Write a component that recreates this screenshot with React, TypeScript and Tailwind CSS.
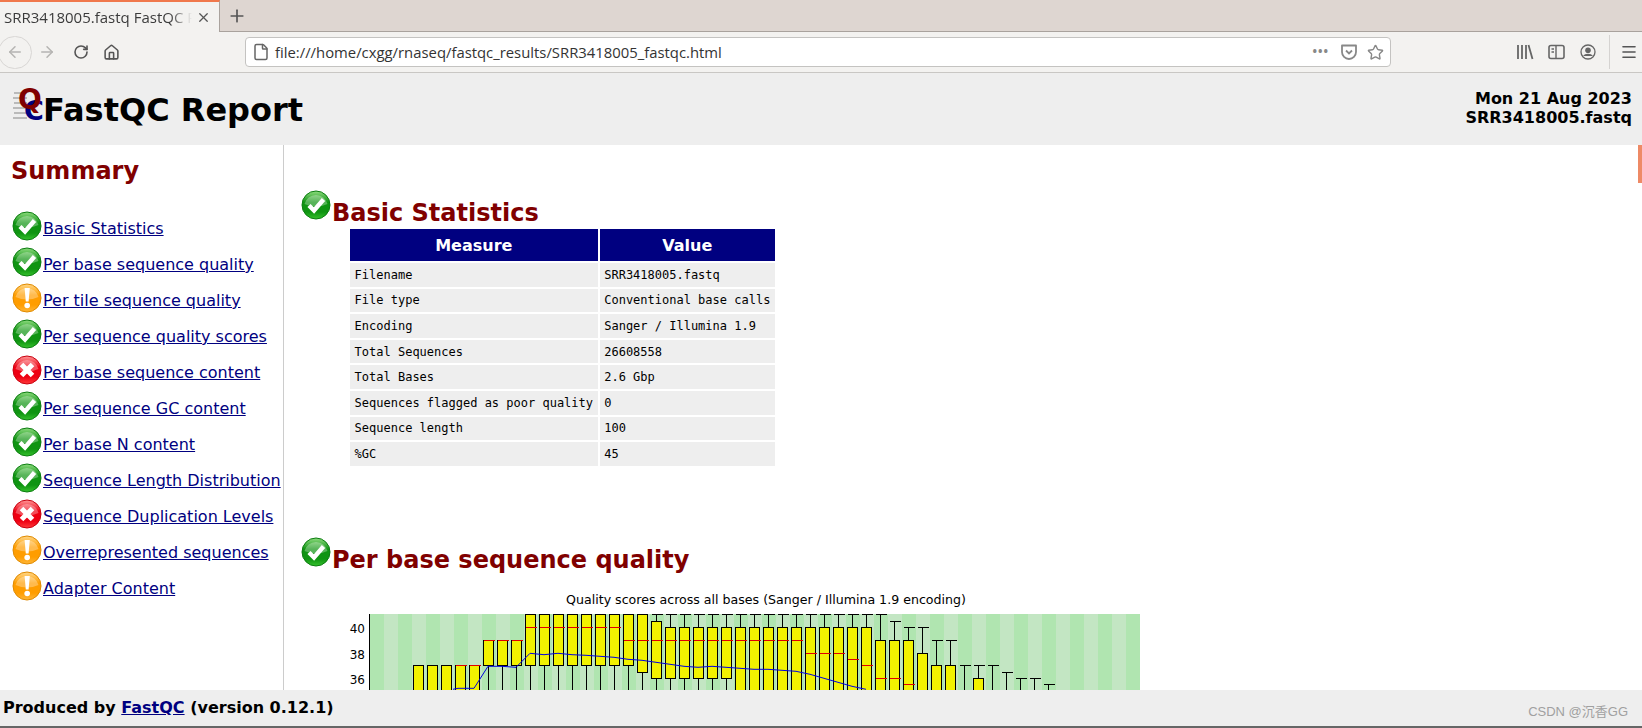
import { ArrowLeft, ArrowRight, RotateCw, Home, File, X, Plus, Star, Menu } from 'lucide-react';

type Status = 'ok' | 'warn' | 'fail';

const modules: { name: string; status: Status }[] = [
  { name: 'Basic Statistics', status: 'ok' },
  { name: 'Per base sequence quality', status: 'ok' },
  { name: 'Per tile sequence quality', status: 'warn' },
  { name: 'Per sequence quality scores', status: 'ok' },
  { name: 'Per base sequence content', status: 'fail' },
  { name: 'Per sequence GC content', status: 'ok' },
  { name: 'Per base N content', status: 'ok' },
  { name: 'Sequence Length Distribution', status: 'ok' },
  { name: 'Sequence Duplication Levels', status: 'fail' },
  { name: 'Overrepresented sequences', status: 'warn' },
  { name: 'Adapter Content', status: 'warn' },
];

const stats = [
  ['Filename', 'SRR3418005.fastq'],
  ['File type', 'Conventional base calls'],
  ['Encoding', 'Sanger / Illumina 1.9'],
  ['Total Sequences', '26608558'],
  ['Total Bases', '2.6 Gbp'],
  ['Sequences flagged as poor quality', '0'],
  ['Sequence length', '100'],
  ['%GC', '45'],
];

const colors = {
  ok: ['#8fdc80', '#0f9412', '#0b7d10', '#35c22c'],
  warn: ['#ffd88a', '#ff9d00', '#e08a00', '#ffb73a'],
  fail: ['#ff9a9a', '#ee0012', '#c8000e', '#ff3b3b'],
};

function StatusIcon({ status }: { status: Status }) {
  const [light, mid, edge, glow] = colors[status];
  return (
    <svg width="30" height="30" viewBox="0 0 30 30" className="shrink-0">
      <defs>
        <linearGradient id={`grad-${status}`} x1="0" y1="0" x2="0" y2="1">
          <stop offset="0" stopColor={light} />
          <stop offset="0.4" stopColor={mid} />
          <stop offset="0.75" stopColor={mid} />
          <stop offset="1" stopColor={glow} />
        </linearGradient>
      </defs>
      <circle cx="15" cy="15" r="14" fill={`url(#grad-${status})`} stroke={edge} strokeWidth="1" />
      <path d="M3.5 14 A11.8 11.5 0 0 1 26.5 14 Q15 19 3.5 14 Z" fill="#fff" opacity="0.3" />
      {status === 'ok' && <path d="M8 15.5 L13 20.5 L22.5 9.5" fill="none" stroke="#fff" strokeWidth="4.4" />}
      {status === 'warn' && (
        <>
          <path d="M12.6 5 H17.8 L16.6 18.5 H13.8 Z" fill="#fff" />
          <circle cx="15.2" cy="22.5" r="2.8" fill="#fff" />
        </>
      )}
      {status === 'fail' && <path d="M9.5 9.5 L20.5 20.5 M20.5 9.5 L9.5 20.5" fill="none" stroke="#fff" strokeWidth="5" />}
    </svg>
  );
}

function Logo() {
  return (
    <svg width="34" height="36" viewBox="0 0 34 36" className="shrink-0 overflow-visible">
      {[6, 11, 16, 21, 26, 31].map((y, i) => (
        <line key={y} x1={i % 2 ? 2 : 3} y1={y} x2="16" y2={y} stroke="#a8a8a8" strokeWidth="1.5" />
      ))}
      <text x="13" y="33" fontSize="27" fontWeight="700" fill="#000080" fontFamily="'DejaVu Sans', sans-serif">C</text>
      <text x="7" y="22" fontSize="28" fontWeight="700" fill="#800000" fontFamily="'DejaVu Sans', sans-serif">Q</text>
    </svg>
  );
}

// chart geometry: pixel positions measured against a y axis running 41 at the top
const yOf = (v: number) => (41 - v) * 12.85;
const xOf = (col: number) => 7.5 + col * 14;

// [column, box top, median or null, whisker top or null]
const boxes: [number, number | null, number | null, number | null][] = [
  [3, 37, null, null], [4, 37, null, null], [5, 37, null, null], [6, 37, 37, null], [7, 37, 37, null],
  [8, 39, 39, null], [9, 39, 39, null], [10, 39, 39, null],
  ...[11, 12, 13, 14, 15, 16, 17].map((c): [number, number, number, null] => [c, 41, 40, null]),
  [18, 41, 39, null], [19, 41, 39, null], [20, 40.45, 39, 41],
  ...[21, 22, 23, 24, 25, 26, 27, 28, 29, 30].map((c): [number, number, number, number] => [c, 40, 39, 41]),
  [31, 40, 38, 41], [32, 40, 38, 41], [33, 40, 38, 41], [34, 40, 37.5, 41], [35, 40, 37, 41],
  [36, 39, 36, 41], [37, 39, 36, 40.45], [38, 39, 35.55, 40], [39, 38, null, 40],
  [40, 37, null, 39], [41, 37, null, 39], [42, null, null, 37], [43, 36, null, 37], [44, null, null, 37],
  [45, null, null, 36.45], [46, null, null, 36], [47, null, null, 36], [48, null, null, 35.55],
];

// box bottoms that end above the fold; everything else runs off the clip
const bottoms: Record<number, number> = {
  8: 37, 9: 37, 10: 37, 11: 37, 12: 37, 13: 37, 14: 37, 15: 37, 16: 37, 17: 37, 18: 37, 19: 36.45,
  20: 36, 21: 36, 22: 36, 23: 36, 24: 36, 25: 36,
};

const meanLine =
  '0,75.3 5,74.3 21,74.3 35,52.3 49,52.3 63,53.3 77,39.3 91,40.7 105,39.3 119,40.7 133,41.3 147,42.3 161,43.3 175,45.3 189,46.3 203,48.3 217,50.3 231,52.3 245,53.3 259,52.3 273,53.3 287,54.3 301,55.3 315,55.3 329,56.3 343,57.3 357,60.3 371,64.3 385,68.3 399,72.3 413,75.3';

function QualityChart() {
  const plotH = 78;
  return (
    <div className="ml-[35px] mt-[19px]">
      <div className="ml-[45px] w-[770px] text-center text-[12.6px] leading-[14px] text-black">
        Quality scores across all bases (Sanger / Illumina 1.9 encoding)
      </div>
      <div className="flex mt-[7px]">
        <div className="relative w-[33px] h-[78px] text-[12px] leading-[14px]">
          <span className="absolute right-[4px] top-[8px]">40</span>
          <span className="absolute right-[4px] top-[34px]">38</span>
          <span className="absolute right-[4px] top-[59px]">36</span>
        </div>
        <svg width="771" height={plotH} viewBox={`0 0 771 ${plotH}`} className="shrink-0" shapeRendering="crispEdges">
          {Array.from({ length: 55 }, (_, i) => (
            <rect key={i} x={i * 14 + 1} y="0" width="14" height={plotH} fill={i % 2 ? '#c3e6c3' : '#b0e5b0'} />
          ))}
          <line x1="0.5" y1="0" x2="0.5" y2={plotH} stroke="#000" />
          {boxes.map(([col, top, med, whisker]) => {
            const x = xOf(col);
            const bottom = bottoms[col];
            const bottomY = bottom ? Math.round(yOf(bottom)) + 0.5 : plotH + 2;
            const topY = top === null ? null : Math.round(yOf(top)) + 0.5;
            return (
              <g key={col}>
                {col >= 8 && <line x1={x} y1={bottomY} x2={x} y2={plotH} stroke="#000" />}
                {whisker !== null && (
                  <>
                    <line x1={x} y1={Math.round(yOf(whisker)) + 0.5} x2={x} y2={topY ?? plotH} stroke="#000" />
                    <line x1={x - 5} y1={Math.round(yOf(whisker)) + 0.5} x2={x + 6} y2={Math.round(yOf(whisker)) + 0.5} stroke="#000" />
                  </>
                )}
                {topY !== null && (
                  <rect x={x - 5} y={topY} width="10" height={bottomY - topY} fill="#f2f200" stroke="#000" />
                )}
                {med !== null && (
                  <line x1={x - 5} y1={Math.round(yOf(med)) + 0.5} x2={x + 6} y2={Math.round(yOf(med)) + 0.5} stroke="#e00000" />
                )}
              </g>
            );
          })}
          <polyline points={meanLine.split(' ').map((p) => {
            const [a, b] = p.split(',').map(Number);
            return `${a + 84},${b}`;
          }).join(' ')} fill="none" stroke="#0000e0" strokeWidth="1" shapeRendering="auto" />
        </svg>
      </div>
    </div>
  );
}

function SectionHeading({ title, className }: { title: string; className: string }) {
  return (
    <h2 className={`flex items-start text-[24px] leading-[28px] font-bold text-[#800000] ${className}`}>
      <StatusIcon status="ok" />
      <span className="mt-[9px] ml-[1px]">{title}</span>
    </h2>
  );
}

export default function App() {
  return (
    <div className="relative flex h-[728px] w-[1642px] flex-col overflow-hidden bg-white font-['DejaVu_Sans',sans-serif]">
      {/* Browser chrome */}
      <div className="flex h-[32px] bg-[#ded6d1] border-b border-[#a9a29d]">
        <div className="flex h-[32px] w-[220px] items-center border-t-2 border-r border-t-[#f0784c] border-r-[#a9a29d] bg-[#f3f2f0] pl-[4px] pr-[8px] font-['Open_Sans',sans-serif] text-[15px] text-[#3b3b3b]">
          <span className="w-[188px] overflow-hidden whitespace-nowrap [mask-image:linear-gradient(to_right,black_88%,transparent)]">SRR3418005.fastq FastQC Report</span>
          <X size={15} strokeWidth={2} className="ml-auto text-[#555]" />
        </div>
        <div className="flex w-[34px] items-center justify-center">
          <Plus size={20} strokeWidth={2} className="text-[#555]" />
        </div>
      </div>
      <div className="flex h-[41px] items-center bg-[#f3f2f0] border-b border-[#c9c7c4]">
        <div className="ml-[-2px] flex h-[33px] w-[34px] items-center justify-center rounded-full border border-[#d8d6d4]">
          <ArrowLeft size={18} className="text-[#b5b4b2]" />
        </div>
        <ArrowRight size={18} className="ml-[6px] text-[#b5b4b2]" />
        <RotateCw size={16} strokeWidth={2.4} className="ml-[17px] text-[#555]" />
        <Home size={17} strokeWidth={2.2} className="ml-[14px] text-[#555]" />
        <div className="ml-[125px] flex h-[30px] w-[1146px] items-center rounded-[4px] border border-[#c4c3c1] bg-white pl-[6px] pr-[6px] font-['Open_Sans',sans-serif] text-[14.85px] text-[#333]">
          <File size={18} className="text-[#666]" />
          <span className="ml-[5px]">file:///home/cxgg/rnaseq/fastqc_results/SRR3418005_fastqc.html</span>
          <span className="ml-auto text-[12px] font-bold tracking-[1px] text-[#888]">•••</span>
          <svg width="18" height="18" viewBox="0 0 18 18" className="ml-[11px]">
            <path d="M2 2.5 H16 V9 A7 7 0 0 1 2 9 Z" fill="none" stroke="#888" strokeWidth="1.8" strokeLinejoin="round" />
            <path d="M6 7.5 L9 10.5 L12 7.5" fill="none" stroke="#888" strokeWidth="1.8" />
          </svg>
          <Star size={17} strokeWidth={2} className="ml-[9px] text-[#888]" />
        </div>
        <div className="ml-auto flex items-center pr-[4px]">
          <svg width="18" height="16" viewBox="0 0 18 16">
            <path d="M2 1 V15 M6 1 V15 M10 1 V15 M12.5 1 L16.5 15" fill="none" stroke="#666" strokeWidth="1.8" />
          </svg>
          <svg width="18" height="16" viewBox="0 0 18 16" className="ml-[14px]">
            <rect x="1" y="1.5" width="15" height="13" rx="2" fill="none" stroke="#666" strokeWidth="1.6" />
            <path d="M8 1.5 V14.5 M3.5 5 H6 M3.5 8 H6" fill="none" stroke="#666" strokeWidth="1.4" />
          </svg>
          <svg width="16" height="16" viewBox="0 0 16 16" className="ml-[14px]">
            <circle cx="8" cy="8" r="7" fill="none" stroke="#666" strokeWidth="1.3" />
            <circle cx="8" cy="6.2" r="2.8" fill="#666" />
            <path d="M3 12 A5.5 4 0 0 1 13 12 Z" fill="#666" />
          </svg>
          <div className="ml-[13px] h-[34px] w-px bg-[#d5d3d1]" />
          <Menu size={18} strokeWidth={2.2} className="ml-[10px] text-[#555]" />
        </div>
      </div>

      {/* Report header */}
      <header className="flex h-[72px] shrink-0 items-start justify-between bg-[#eeeeee] pr-[10px] text-black">
        <div className="flex pl-[11px] pt-[14px]">
          <Logo />
          <h1 className="ml-[-2px] mt-[4px] text-[32px] font-bold leading-[38px]">FastQC Report</h1>
        </div>
        <div className="pt-[16px] text-right text-[16px] font-bold leading-[19px]">
          <div>Mon 21 Aug 2023</div>
          <div>SRR3418005.fastq</div>
        </div>
      </header>

      {/* Body */}
      <div className="flex min-h-0 flex-1">
        <aside className="w-[284px] shrink-0 border-r border-[#cccccc] pl-[12px]">
          <h2 className="ml-[-1px] mt-[12px] text-[24px] font-bold leading-[28px] text-[#800000]">Summary</h2>
          <ul className="mt-[26px]">
            {modules.map((m) => (
              <li key={m.name} className="flex h-[36px] items-start">
                <StatusIcon status={m.status} />
                <a href="#" className="ml-[1px] mt-[8px] whitespace-nowrap text-[16px] leading-[19px] text-[#000080] underline">
                  {m.name}
                </a>
              </li>
            ))}
          </ul>
        </aside>

        <main className="min-w-0 flex-1 overflow-hidden pl-[17px]">
          <SectionHeading title="Basic Statistics" className="mt-[45px]" />
          <table className="ml-[47px] border-separate border-spacing-[2px] font-['DejaVu_Sans_Mono',monospace] text-[12px] text-black">
            <thead>
              <tr>
                <th className="h-[32px] bg-[#000080] pt-[1px] text-[16px] font-bold text-white font-['DejaVu_Sans',sans-serif]">Measure</th>
                <th className="h-[32px] bg-[#000080] pt-[1px] text-[16px] font-bold text-white font-['DejaVu_Sans',sans-serif]">Value</th>
              </tr>
            </thead>
            <tbody>
              {stats.map(([k, v]) => (
                <tr key={k}>
                  <td className="h-[23.6px] bg-[#eeeeee] px-[4.6px] leading-[14px]">{k}</td>
                  <td className="h-[23.6px] bg-[#eeeeee] px-[4.6px] leading-[14px]">{v}</td>
                </tr>
              ))}
            </tbody>
          </table>
          <SectionHeading title="Per base sequence quality" className="mt-[69px]" />
          <QualityChart />
        </main>
      </div>

      {/* Footer */}
      <footer className="flex h-[38px] shrink-0 items-center border-b-2 border-[#666] bg-[#eeeeee] pl-[3px] text-[16px] font-bold text-black">
        <span>
          Produced by <a href="#" className="text-[#000080] underline">FastQC</a> (version 0.12.1)
        </span>
      </footer>

      {/* Scrollbar thumb and image watermark */}
      <div className="absolute right-0 top-[145px] h-[38px] w-[4px] bg-[#ee8a66]" />
      <div className="absolute bottom-[7px] right-[14px] text-[13px] text-[#a0a0a0] font-['Liberation_Sans','Noto_Sans_CJK_SC',sans-serif]">CSDN @沉香GG</div>
    </div>
  );
}
